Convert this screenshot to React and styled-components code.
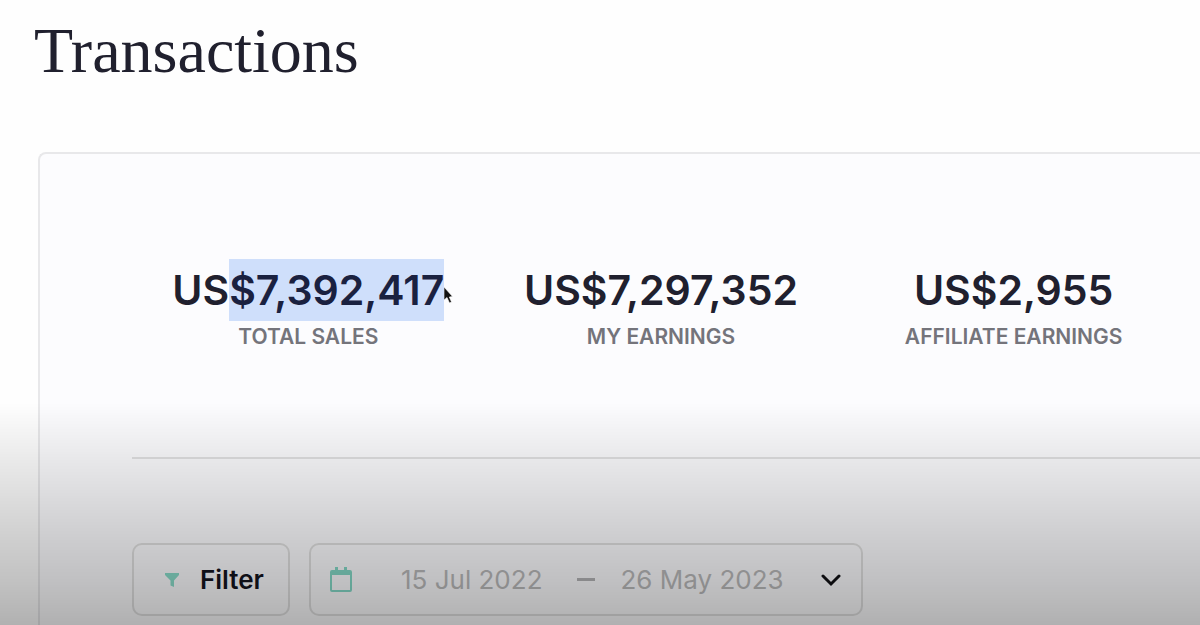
import React from "react";
import styled, { createGlobalStyle } from "styled-components";

const GlobalStyle = createGlobalStyle`
  * {
    box-sizing: border-box;
  }
  body {
    margin: 0;
    background: #fefefe;
    color: #20202e;
    font-family: Inter, "Liberation Sans", sans-serif;
    overflow: hidden;
  }
`;

const Page = styled.main`
  min-height: 100vh;
  padding: 15px 0 0 38px;
`;
const Title = styled.h1`
  margin: 0 0 65px -4px;
  font-family: "Palatino Linotype", Palatino, "Liberation Serif", serif;
  font-size: 64px;
  font-weight: 400;
  line-height: 72px;
`;
const Panel = styled.section`
  min-height: calc(100vh - 152px);
  padding: 105px 0 0 92px;
  border: 2px solid #e8e8ea;
  border-width: 2px 0 0 2px;
  border-top-left-radius: 8px;
  background: #fcfcfe;
`;
const Stats = styled.div`
  display: grid;
  grid-template-columns: repeat(3, 1fr);
  padding: 0 10px 104px 0;
  border-bottom: 2px solid #e2e2e3;
`;
const Stat = styled.div`
  display: flex;
  flex-direction: column;
  align-items: center;
`;
const Amount = styled.div`
  font-size: 41px;
  font-weight: 600;
  line-height: 62px;
  white-space: nowrap;
`;
const Selected = styled.span`
  position: relative;
  display: inline-block;
  background: #cfdffb;
  color: #1a2140;
`;
const Pointer = styled.svg`
  position: absolute;
  top: 27px;
  left: 100%;
  width: 10px;
  height: 18px;
`;
const Label = styled.div`
  color: #74747b;
  font-size: 21px;
  font-weight: 600;
  line-height: 32px;
  white-space: nowrap;
`;
const Toolbar = styled.div`
  display: flex;
  gap: 19px;
  padding: 84px 0 10px;
`;
const ToolButton = styled.button`
  display: flex;
  align-items: center;
  height: 73px;
  padding: 0 ${(props) => (props.$wide ? "20px 0 18px" : "24px 0 30px")};
  width: ${(props) => (props.$wide ? "554px" : "158px")};
  border: 2px solid #e0e0e0;
  border-radius: 10px;
  background: transparent;
  color: #14141f;
  font-family: inherit;
  font-size: 26px;
  font-weight: 600;
  line-height: 32px;
  white-space: nowrap;
`;
const FilterIcon = styled.svg`
  width: 16px;
  height: 16px;
  margin-right: 20px;
`;
const CalendarIcon = styled.svg`
  width: 24px;
  height: 26px;
  margin-right: 48px;
`;
const DateText = styled.span`
  color: #bababb;
  font-weight: 400;
`;
const Dash = styled.span`
  width: 18px;
  height: 3px;
  margin: 0 26px 0 34px;
  background: #b4b4b6;
`;
const Chevron = styled.svg`
  width: 20px;
  height: 14px;
  margin-left: auto;
`;
const Shade = styled.div`
  position: fixed;
  right: 0;
  bottom: 0;
  left: 0;
  height: 222px;
  background: linear-gradient(
    rgba(0, 0, 0, 0) 0%,
    rgba(0, 0, 0, 0.08) 25%,
    rgba(0, 0, 0, 0.185) 61%,
    rgba(0, 0, 0, 0.235) 80%,
    rgba(0, 0, 0, 0.3) 100%
  );
  pointer-events: none;
`;

const stats = [
  { prefix: "US", selected: "$7,392,417", label: "TOTAL SALES" },
  { prefix: "US$7,297,352", label: "MY EARNINGS" },
  { prefix: "US$2,955", label: "AFFILIATE EARNINGS" },
];

const App = () => {
  return (
    <>
      <GlobalStyle />
      <Page>
        <Title>Transactions</Title>
        <Panel>
          <Stats>
            {stats.map((stat) => (
              <Stat key={stat.label}>
                <Amount>
                  {stat.prefix}
                  {stat.selected && (
                    <Selected>
                      {stat.selected}
                      <Pointer viewBox="0 0 10 18" aria-hidden="true">
                        <path
                          d="M0 1 L0 14 L3 11.500 L5.500 17 L7.500 16 L5.300 11 L8.500 10.500 Z"
                          fill="#111"
                          stroke="#fff"
                          strokeWidth="0.600"
                        />
                      </Pointer>
                    </Selected>
                  )}
                </Amount>
                <Label>{stat.label}</Label>
              </Stat>
            ))}
          </Stats>
          <Toolbar>
            <ToolButton type="button">
              <FilterIcon viewBox="0 0 16 16" aria-hidden="true">
                <path d="M1 1h14v2L10 8.500V15L6.500 13.500v-5L1 3z" fill="#8adcca" />
              </FilterIcon>
              Filter
            </ToolButton>
            <ToolButton type="button" $wide>
              <CalendarIcon viewBox="0 0 24 26" aria-hidden="true">
                <path
                  d="M6 0h3v3h6V0h3v3h3a2 2 0 0 1 2 2v18a2 2 0 0 1-2 2H3a2 2 0 0 1-2-2V5a2 2 0 0 1 2-2h3zM3 8v15h18V8z"
                  fill="#84d9c7"
                  fillRule="evenodd"
                />
              </CalendarIcon>
              <DateText>15 Jul 2022</DateText>
              <Dash />
              <DateText>26 May 2023</DateText>
              <Chevron viewBox="0 0 20 14" aria-hidden="true">
                <path
                  d="M2 3l8 8 8-8"
                  fill="none"
                  stroke="#111116"
                  strokeWidth="3"
                  strokeLinecap="round"
                />
              </Chevron>
            </ToolButton>
          </Toolbar>
        </Panel>
      </Page>
      <Shade />
    </>
  );
};

export default App;
